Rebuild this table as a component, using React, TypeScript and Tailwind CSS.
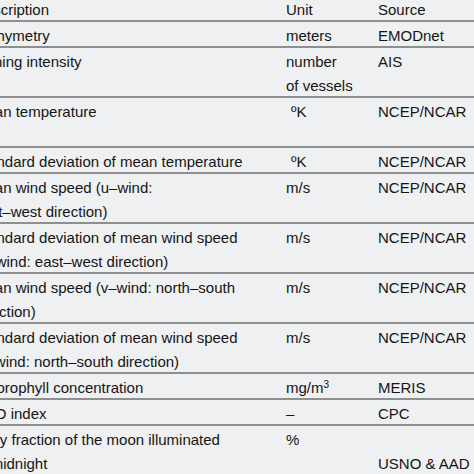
import React from "react";

type Row = {
  desc: React.ReactNode;
  unit: React.ReactNode;
  source: React.ReactNode;
};

const ROWS: Row[] = [
  { desc: "Bathymetry", unit: "meters", source: "EMODnet" },
  {
    desc: "Fishing intensity",
    unit: (
      <>
        number
        <br />
        of vessels
      </>
    ),
    source: "AIS",
  },
  {
    desc: (
      <>
        Mean temperature
        <br />
        &nbsp;
      </>
    ),
    unit: <span className="pl-[5px]">ºK</span>,
    source: "NCEP/NCAR",
  },
  {
    desc: "Standard deviation of mean temperature",
    unit: <span className="pl-[5px]">ºK</span>,
    source: "NCEP/NCAR",
  },
  {
    desc: (
      <>
        Mean wind speed (u–wind:
        <br />
        east–west direction)
      </>
    ),
    unit: "m/s",
    source: "NCEP/NCAR",
  },
  {
    desc: (
      <>
        Standard deviation of mean wind speed
        <br />
        (u–wind: east–west direction)
      </>
    ),
    unit: "m/s",
    source: "NCEP/NCAR",
  },
  {
    desc: (
      <>
        Mean wind speed (v–wind: north–south
        <br />
        direction)
      </>
    ),
    unit: "m/s",
    source: "NCEP/NCAR",
  },
  {
    desc: (
      <>
        Standard deviation of mean wind speed
        <br />
        (v–wind: north–south direction)
      </>
    ),
    unit: "m/s",
    source: "NCEP/NCAR",
  },
  {
    desc: "Chlorophyll concentration",
    unit: (
      <>
        mg/m<sup className="text-[10px]">3</sup>
      </>
    ),
    source: "MERIS",
  },
  { desc: "NAO index", unit: "–", source: "CPC" },
  {
    desc: (
      <>
        Daily fraction of the moon illuminated
        <br />
        at midnight
      </>
    ),
    unit: "%",
    source: (
      <>
        &nbsp;
        <br />
        USNO &amp; AAD
      </>
    ),
  },
];

function TableRow({ row, last }: { row: Row; last?: boolean }) {
  return (
    <div
      className={`grid grid-cols-[312px_92px_1fr] ${
        last ? "" : "border-b-2 border-[#8e8e8e]"
      }`}
    >
      <div className="relative top-[2px] whitespace-nowrap">{row.desc}</div>
      <div className="relative top-[2px] whitespace-nowrap">{row.unit}</div>
      <div className="relative top-[2px] whitespace-nowrap">{row.source}</div>
    </div>
  );
}

export default function App() {
  return (
    <div className="h-[474px] w-[474px] overflow-hidden bg-[#eef0f2] text-[#151515]">
      <div
        className="-ml-[26px] -mt-[4px] w-[500px] text-[15px] leading-[24px]"
        style={{ fontFamily: '"Liberation Sans", Arial, sans-serif' }}
      >
        <TableRow
          row={{ desc: "Description", unit: "Unit", source: "Source" }}
        />
        {ROWS.map((row, i) => (
          <TableRow key={i} row={row} last={i === ROWS.length - 1} />
        ))}
      </div>
    </div>
  );
}
